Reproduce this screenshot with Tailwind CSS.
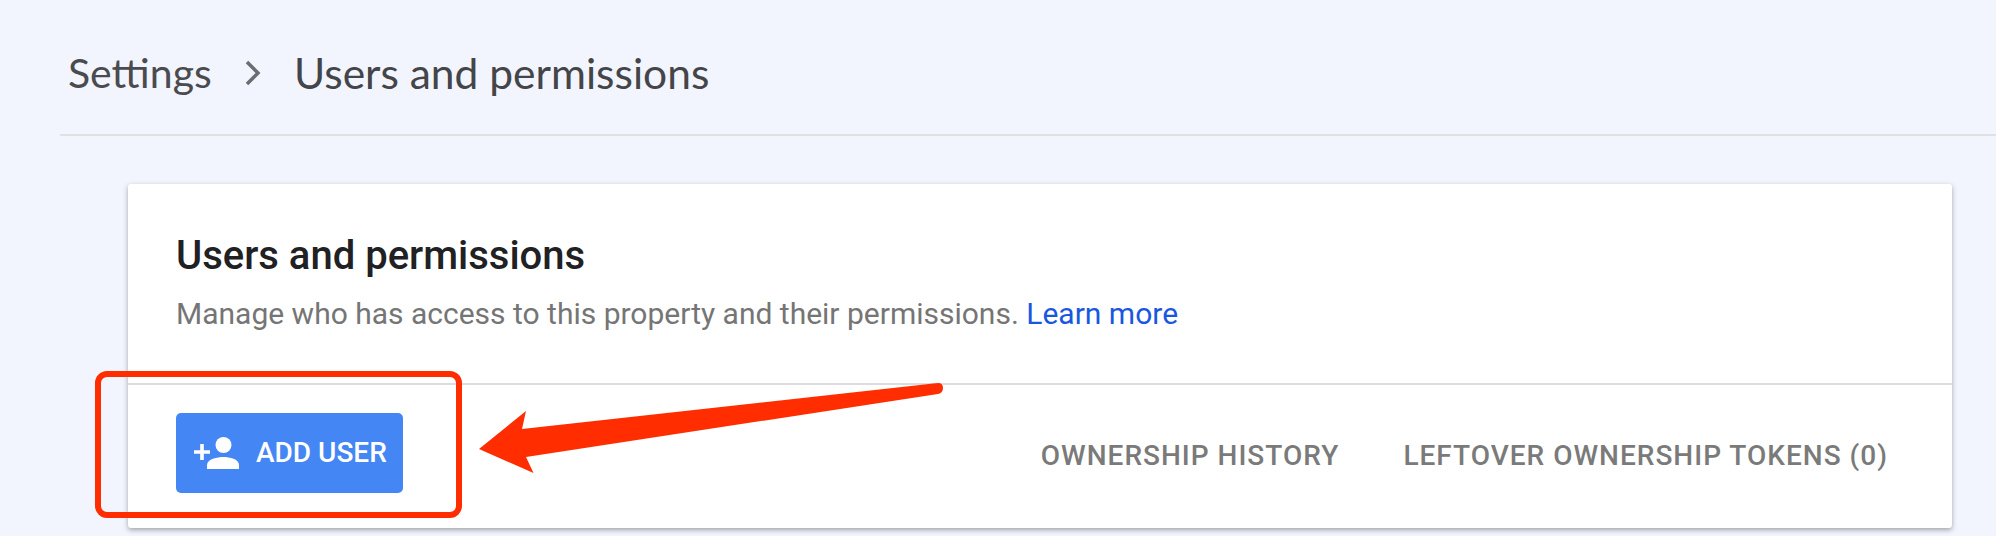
<!DOCTYPE html>
<html lang="en">

<head>
  <meta charset="UTF-8">
  <title>Users and permissions</title>
  <script src="https://cdn.jsdelivr.net/npm/@tailwindcss/browser@4"></script>
</head>

<body class="relative w-[1996px] h-[536px] overflow-hidden bg-[#f2f5fd] font-['Roboto',sans-serif]">

  <!-- Breadcrumb -->
  <div class="ml-[60px] h-[136px] pl-[8px] pt-[12px] flex items-center border-b-2 border-[#dfe1e5] text-[#4a4b4f] font-['Lato',sans-serif]">
    <span class="w-[177px] text-[41px]">Settings</span>
    <svg class="w-[16px] h-[26px] mr-[33px]" viewBox="0 0 16 26" fill="none" stroke="#6b6d70" stroke-width="3.5">
      <path d="M2 2l11 11-11 11" />
    </svg>
    <span class="text-[42.5px] text-[#444549]">Users and permissions</span>
  </div>

  <!-- Card -->
  <div class="ml-[128px] mt-[48px] w-[1824px] h-[344px] bg-white rounded-[3px] shadow-[0_2px_5px_rgba(60,64,67,0.45)]">
    <div class="h-[201px] px-[48px] pt-[49px] border-b-2 border-[#dadce0]">
      <h1 class="text-[40px] leading-[46px] font-medium text-[#212124]">Users and permissions</h1>
      <p class="mt-[16px] text-[30px] leading-[38px] text-[#757575]">Manage who has access to this property and their permissions. <a href="#" class="text-[#1a57e0]">Learn more</a></p>
    </div>
    <div class="flex items-start pl-[48px] pr-[64px] pt-[28px]">
      <button class="w-[227px] h-[80px] flex items-center pl-[18px] gap-[17px] bg-[#4586f5] rounded-[5px] text-white text-[28px] font-medium">
        <svg class="w-[45px] h-[32px]" viewBox="0 0 45 32" fill="white">
          <path d="M0 13.2h6.2V7h3.6v6.2H16v3.6H9.8V23H6.2v-6.2H0z" />
          <circle cx="29.5" cy="8" r="8" />
          <path d="M13 32v-4c0-6 10.500-8 16.500-8s15.500 2 15.500 8v4z" />
        </svg>
        ADD USER
      </button>
      <div class="ml-auto flex gap-[64px] pt-[28px] text-[28px] leading-[30px] font-medium tracking-[1px] text-[#7a7a7a]">
        <a href="#">OWNERSHIP HISTORY</a>
        <a href="#">LEFTOVER OWNERSHIP TOKENS (0)</a>
      </div>
    </div>
  </div>

  <!-- Annotation -->
  <div class="absolute left-[95px] top-[371px] w-[367px] h-[147px] border-[6px] border-[#ff2d00] rounded-[12px]"></div>
  <svg class="absolute left-0 top-0" width="1996" height="536" viewBox="0 0 1996 536">
    <path d="M479 449L526 411L522 429L938 383Q943 383 943 388Q943 393 938 394L526 457L533.5 473Z" fill="#ff2d00" />
  </svg>

</body>

</html>
